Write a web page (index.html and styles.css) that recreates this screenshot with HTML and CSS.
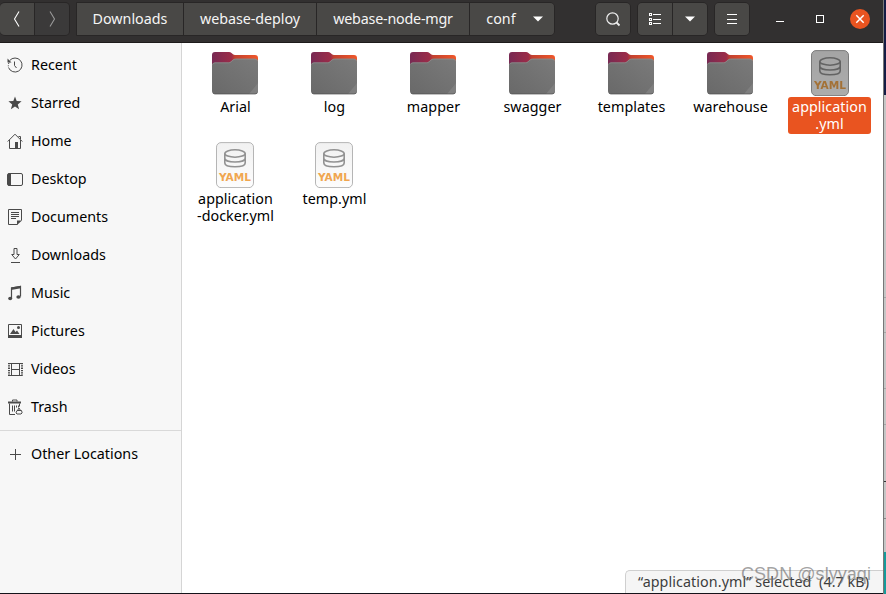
FILE: index.html
```
<!DOCTYPE html>
<html lang="en">
<head>
    <meta charset="UTF-8">
    <meta name="viewport" content="width=device-width, initial-scale=1.0">
    <title>conf</title>
    <link rel="stylesheet" href="styles.css">
</head>
<body>
    <svg class="defs" width="0" height="0">
        <defs>
            <linearGradient id="folder-back" x1="0" x2="1" y1="0" y2="0">
                <stop offset="0" stop-color="#772953"/>
                <stop offset=".42" stop-color="#9c2c48"/>
                <stop offset=".5" stop-color="#c2412f"/>
                <stop offset="1" stop-color="#f0572a"/>
            </linearGradient>
            <linearGradient id="folder-front" x1="0" x2="1" y1="1" y2="0">
                <stop offset="0" stop-color="#696969"/>
                <stop offset="1" stop-color="#7a7a7a"/>
            </linearGradient>
            <linearGradient id="paper" x1="0" x2="0" y1="0" y2="1">
                <stop offset="0" stop-color="#f1f1f1"/>
                <stop offset="1" stop-color="#fdfdfd"/>
            </linearGradient>
        </defs>
        <symbol id="folder" viewBox="0 0 48 46">
            <path d="M1 5a3 3 0 0 1 3-3h14q1.500 0 2.500 1l1.500 1.300q.800.700 2 .700H44a3 3 0 0 1 3 3v12H1z" fill="url(#folder-back)"/>
            <path d="M1 15.500a3 3 0 0 1 3-3h13.500q1.500 0 2.500-1l2-1.800q1-.900 2.500-.900H44a3 3 0 0 1 3 3V41a3 3 0 0 1-3 3H4a3 3 0 0 1-3-3z" fill="url(#folder-front)"/>
            <path d="M1.500 14.500a3 3 0 0 1 2.500-1.700h13.500q1.500 0 2.500-1l2-1.800q1-.900 2.500-.900H44a3 3 0 0 1 2.500 1.700" fill="none" stroke="#929292" stroke-width=".7"/>
            <path d="M38 44l9-11v8a3 3 0 0 1-3 3z" fill="#7f7f7f"/>
            <path d="M2 43q1 1 2 1h40q1 0 2-1" fill="none" stroke="#4e4e4e" stroke-width=".7"/>
        </symbol>
        <symbol id="yaml" viewBox="0 0 48 46">
            <rect x="5.500" y=".600" width="37" height="45" rx="4.500" fill="url(#paper)" stroke="#b5b5b5"/>
            <g fill="none" stroke="#929292" stroke-width="1.600">
                <ellipse cx="24" cy="11.500" rx="10.200" ry="3.700"/>
                <path d="M13.800 11.500v9.500c0 2.300 4.600 3.700 10.200 3.700s10.200-1.400 10.200-3.700v-9.500M13.800 16.300c0 2.200 4.600 3.700 10.200 3.700s10.200-1.500 10.200-3.700"/>
            </g>
            <text class="yaml-text" x="8" y="38.500" textLength="32" lengthAdjust="spacingAndGlyphs">YAML</text>
        </symbol>
    </svg>

    <div class="window">
        <header class="headerbar">
            <div class="group nav">
                <button class="btn"><svg width="16" height="16"><path d="M10 .500L5.500 8l4.500 7.500" fill="none" stroke="#fff" stroke-width="1.100"/></svg></button>
                <button class="btn off"><svg width="16" height="16"><path d="M6 .500L10.500 8 6 15.500" fill="none" stroke="#999" stroke-width="1.100"/></svg></button>
            </div>
            <div class="group path">
                <button class="btn w106">Downloads</button>
                <button class="btn w132 deploy">webase-deploy</button>
                <button class="btn w152 mgr">webase-node-mgr</button>
                <button class="btn w84">conf <svg width="10" height="6"><path d="M0 .500h10L5 5.500z" fill="#fff"/></svg></button>
            </div>
            <div class="tools">
                <div class="group">
                    <button class="btn"><svg width="16" height="16" fill="none" stroke="#eee"><circle cx="7.500" cy="7.500" r="5.700" stroke-width="1.200"/><path d="M11.500 11.500l3 3" stroke-width="1.800"/></svg></button>
                </div>
                <div class="group">
                    <button class="btn"><svg width="16" height="16" fill="none" stroke="#fff" shape-rendering="crispEdges"><path d="M6 3.500h8M6 8.500h8M6 12.500h8M2.500 2.500h2v2h-2zM2.500 7.500h2v2h-2zM2.500 11.500h2v2h-2z"/></svg></button>
                    <button class="btn"><svg width="10" height="6"><path d="M0 .500h10L5 5.500z" fill="#fff"/></svg></button>
                </div>
                <div class="group">
                    <button class="btn"><svg width="16" height="16" stroke="#fff" shape-rendering="crispEdges"><path d="M3 3.500h10M3 8.500h10M3 12.500h10"/></svg></button>
                </div>
            </div>
            <div class="controls">
                <svg width="16" height="16" stroke="#fff" shape-rendering="crispEdges"><path d="M4 10.500h8"/></svg>
                <svg width="16" height="16" fill="none" stroke="#fff" shape-rendering="crispEdges"><path d="M4.500 4.500h7v7h-7z"/></svg>
                <span class="close"><svg width="20" height="20" stroke="#fff" stroke-width="1.500"><path d="M6.300 6.300l7.400 7.400M13.700 6.300l-7.400 7.400"/></svg></span>
            </div>
        </header>

        <div class="main">
            <nav class="sidebar">
                <a class="place"><svg viewBox="0 0 16 16"><path d="M2.700 3.500A7 7 0 1 1 1.500 10.500" fill="none" stroke="#4a4a4a"/><path d="M1.300 9.300v-1M1.500 7l.500-1.500" stroke="#4a4a4a"/><path d="M.500 1.500v4h4z" fill="#4a4a4a"/><path d="M7.500 4.500v4l2 2.500" fill="none" stroke="#4a4a4a"/></svg><span>Recent</span></a>
                <a class="place"><svg viewBox="0 0 16 16"><path d="M8 1.500l1.700 4.600 4.900.200-3.800 3.100 1.300 4.800L8 11.500l-4.100 2.700 1.300-4.800-3.800-3.100 4.900-.200z" fill="#4a4a4a"/></svg><span>Starred</span></a>
                <a class="place"><svg viewBox="0 0 16 16"><path d="M.700 8.500L8 1.200l7.300 7.300M2.500 7v8.500h11V7M11.500 3.500h2V6" fill="none" stroke="#4a4a4a"/><path d="M8 9h3v6.500H8z" fill="#4a4a4a"/></svg><span>Home</span></a>
                <a class="place"><svg viewBox="0 0 16 16"><rect x=".500" y="2.500" width="15" height="12" rx="1.500" fill="none" stroke="#4a4a4a"/><path d="M1 2.500h3v12H1z" fill="#4a4a4a"/></svg><span>Desktop</span></a>
                <a class="place"><svg viewBox="0 0 16 16"><path d="M10.500 15.500h-9V.500h13v11" fill="none" stroke="#4a4a4a"/><path d="M4 3.500h8M4 5.500h8M4 7.500h8M4 9.500h5" stroke="#4a4a4a"/><path d="M10 16v-4.500h5z" fill="#4a4a4a"/></svg><span>Documents</span></a>
                <a class="place"><svg viewBox="0 0 16 16"><path d="M7 1.500h3v6h2.300L8.500 12 4.700 7.500H7zM4 15.500h9" fill="none" stroke="#4a4a4a"/></svg><span>Downloads</span></a>
                <a class="place"><svg viewBox="0 0 16 16"><path d="M4.500 13.500V3l9-1.500v10" fill="none" stroke="#4a4a4a" stroke-width="1.200"/><path d="M4 2.500l10-1.700v2.500L4 5z" fill="#4a4a4a"/><ellipse cx="3.200" cy="13.500" rx="2" ry="1.800" fill="#4a4a4a"/><ellipse cx="11.500" cy="12" rx="2.200" ry="1.800" fill="#4a4a4a"/></svg><span>Music</span></a>
                <a class="place"><svg viewBox="0 0 16 16"><path d="M1.500 1.500h13v13h-13z" fill="none" stroke="#4a4a4a"/><path d="M1 12h14v3H1zM3 11l3.500-5 2 3 1.500-1.500 2.500 3.500z" fill="#4a4a4a"/><circle cx="11.500" cy="4.500" r="1.500" fill="#4a4a4a"/></svg><span>Pictures</span></a>
                <a class="place"><svg viewBox="0 0 16 16"><path d="M1 2.500h14M1 14.500h14M4.500 2.500v12M12.500 2.500v12M4.500 8.500h8" stroke="#4a4a4a"/><path d="M2 2v13M15 2v13" stroke="#4a4a4a" stroke-width="2" stroke-dasharray="1.300 1"/></svg><span>Videos</span></a>
                <a class="place"><svg viewBox="0 0 16 16"><path d="M1 3.500h13" stroke="#4a4a4a" stroke-width="2"/><path d="M5.500 2.500v-1.500h4.500v1.500M2.500 4.500v11H8M12.500 4.500v3M5.500 6.500v6M7.500 6.500v6M9.500 6.500v2M11.500 6.500v2" fill="none" stroke="#4a4a4a"/><path d="M12 9l-1.500 2.500M12 9l1.500 2.500M10 11.500q-2 3 0 3.500h4q2-.500.500-3.500z" fill="none" stroke="#4a4a4a"/></svg><span>Trash</span></a>
                <hr class="line">
                <a class="place"><svg viewBox="0 0 16 16"><path d="M3 8.500h11M8.500 3v11" stroke="#4a4a4a"/></svg><span>Other Locations</span></a>
            </nav>

            <div class="files">
                <div class="file"><svg><use href="#folder"/></svg><span>Arial</span></div>
                <div class="file"><svg><use href="#folder"/></svg><span>log</span></div>
                <div class="file"><svg><use href="#folder"/></svg><span>mapper</span></div>
                <div class="file"><svg><use href="#folder"/></svg><span>swagger</span></div>
                <div class="file"><svg><use href="#folder"/></svg><span>templates</span></div>
                <div class="file"><svg><use href="#folder"/></svg><span>warehouse</span></div>
                <div class="file selected"><svg><use href="#yaml"/></svg><span>application<br>.yml</span></div>
                <div class="file"><svg><use href="#yaml"/></svg><span>application<br>-docker.yml</span></div>
                <div class="file"><svg><use href="#yaml"/></svg><span>temp.yml</span></div>
            </div>
        </div>

        <div class="status">“application.yml” selected&nbsp; (4.7 kB)</div>
    </div>
    <div class="backdrop"></div>
    <div class="watermark">CSDN @slyyaqi</div>
</body>
</html>
```
FILE: styles.css
```
* {
    box-sizing: border-box;
}
body {
    margin: 0;
    width: 886px;
    height: 594px;
    overflow: hidden;
    display: flex;
    background-color: #15131a;
    font-family: "Noto Sans", sans-serif;
    font-size: 14.3px;
    color: #000;
}
.defs {
    position: absolute;
}
.window {
    position: relative;
    width: 883px;
    height: 593px;
    background-color: #fff;
    display: flex;
    flex-direction: column;
}
.headerbar {
    height: 43px;
    flex: none;
    display: flex;
    align-items: flex-start;
    padding-top: 2px;
    background-color: #323030;
    border-bottom: 1px solid #1d1b1b;
}
.group {
    display: flex;
    border: 1px solid #282626;
    border-radius: 5px;
    overflow: hidden;
}
.btn {
    width: 35px;
    height: 32px;
    padding: 0 0 2px;
    border: none;
    border-right: 1px solid #282626;
    background-color: #494846;
    color: #f5f5f5;
    font: inherit;
    display: flex;
    align-items: center;
    justify-content: center;
}
.btn svg {
    position: relative;
    top: 1px;
}
.btn:last-child {
    width: 34px;
    border-right: none;
}
.btn.off {
    background-color: #3b3a3a;
}
.nav {
    width: 70px;
    border-left: none;
}
.path {
    margin-left: 6px;
    border-radius: 0 5px 5px 0;
}
.path .w106 {
    width: 107px;
}
.path .w132 {
    width: 133px;
}
.path .w152 {
    width: 153px;
}
.path .w84 {
    width: 84px;
    padding-left: 5px;
    gap: 17px;
}
.deploy {
    letter-spacing: -0.05px;
}
.mgr {
    letter-spacing: -0.2px;
}
.tools {
    display: flex;
    gap: 6px;
    margin-left: 40px;
}
.controls {
    display: flex;
    align-items: center;
    gap: 24px;
    height: 34px;
    margin-left: 22px;
}
.close {
    width: 20px;
    height: 20px;
    margin-left: -2px;
    border-radius: 50%;
    background-color: #e95420;
}
.close svg {
    display: block;
}
.main {
    display: flex;
    flex: 1;
}
.sidebar {
    width: 182px;
    padding-top: 3px;
    background-color: #f7f7f7;
    border-right: 1px solid #d5d5d5;
}
.place {
    height: 38px;
    padding-left: 7px;
    display: flex;
    align-items: center;
    gap: 8px;
}
.place svg {
    width: 16px;
    height: 16px;
    flex: none;
}
.place span {
    padding-bottom: 2px;
}
.line {
    height: 1px;
    margin: 4px 0;
    border: none;
    background-color: #d9d9d9;
}
.files {
    display: grid;
    grid-template-columns: repeat(7, 99px);
    grid-auto-rows: 84px;
    row-gap: 8px;
    align-content: start;
    padding: 7px 0 0 4px;
}
.file {
    display: flex;
    flex-direction: column;
    align-items: center;
    text-align: center;
    line-height: 17px;
    letter-spacing: 0.06px;
}
.file svg {
    width: 48px;
    height: 46px;
    margin-right: 2px;
    flex: none;
}
.file span {
    margin-top: 1px;
    padding: 1px 4px 2px;
    border-radius: 3px;
}
.yaml-text {
    font-family: "DejaVu Sans", sans-serif;
    font-size: 10.5px;
    font-weight: bold;
    letter-spacing: 0;
    fill: #f0a650;
}
.selected svg {
    margin-right: 0;
    filter: brightness(0.68);
}
.selected span {
    background-color: #e95420;
    color: #fff;
}
.status {
    position: absolute;
    right: 0;
    bottom: 0;
    width: 258px;
    height: 23px;
    padding-left: 12px;
    line-height: 22px;
    letter-spacing: 0.08px;
    background-color: #f5f5f5;
    border: 1px solid #cfcfcf;
    border-width: 1px 0 0 1px;
    border-radius: 5px 0 0 0;
    color: #3d3d3d;
    white-space: nowrap;
}
/* strip of the desktop visible beside the window */
.backdrop {
    width: 3px;
    height: 594px;
    border-left: 1px solid #777;
    background: linear-gradient(#141c45 0 95px, #c6c6c6 95px 297px, #a5a5a5 297px 298px, #c6c6c6 298px 332px, #a5a5a5 332px 333px, #c6c6c6 333px 388px, #a5a5a5 388px 389px, #c6c6c6 389px 424px, #a5a5a5 424px 425px, #c6c6c6 425px 481px, #333 481px 482px, #c6c6c6 482px 518px, #888 518px 519px, #c6c6c6 519px 552px, #159b9b 552px);
}
.watermark {
    position: absolute;
    left: 741px;
    top: 564px;
    font-family: "Liberation Sans", sans-serif;
    font-size: 18px;
    line-height: 21px;
    letter-spacing: 0.05px;
    color: rgba(110, 110, 110, 0.65);
    white-space: nowrap;
}
```
